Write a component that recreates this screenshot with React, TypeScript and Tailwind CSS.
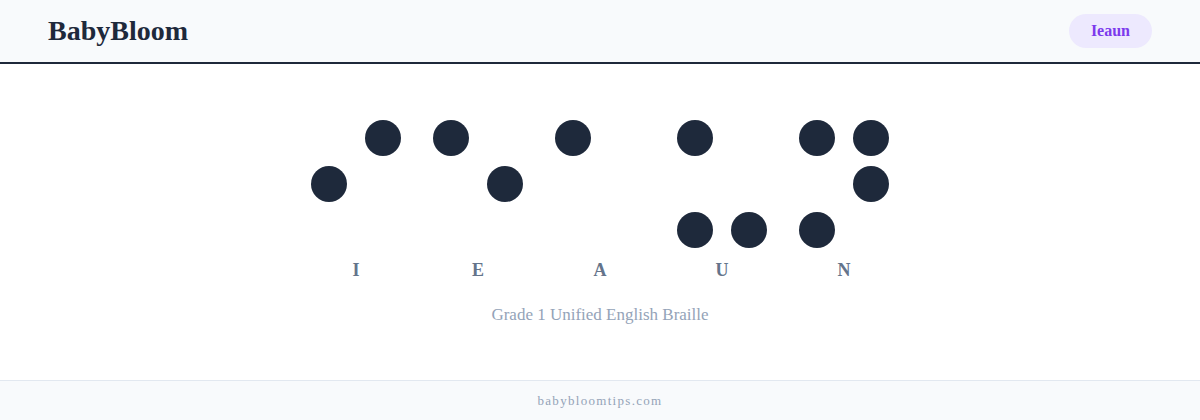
const cells: { letter: string; dots: number[] }[] = [
  { letter: 'I', dots: [2, 4] },
  { letter: 'E', dots: [1, 5] },
  { letter: 'A', dots: [1] },
  { letter: 'U', dots: [1, 3, 6] },
  { letter: 'N', dots: [1, 3, 4, 5] },
];

// braille dot numbering: left column 1,2,3 ; right column 4,5,6
const order = [1, 4, 2, 5, 3, 6];

const BrailleCell = ({ letter, dots }: { letter: string; dots: number[] }) => (
  <div className="flex flex-col items-center">
    <div className="grid grid-cols-[36px_36px] gap-x-[18px] gap-y-[10px]">
      {order.map((n) => (
        <div
          key={n}
          className={'h-9 w-9 rounded-full ' + (dots.includes(n) ? 'bg-[#1e293b]' : 'bg-transparent')}
        />
      ))}
    </div>
    <div className="mt-[10px] text-[18px] leading-6 font-semibold text-[#64748b]">{letter}</div>
  </div>
);

export default function App() {
  return (
    <div className="flex h-[420px] w-full flex-col bg-white font-['Liberation_Serif',serif]">
      <header className="flex h-16 shrink-0 items-center justify-between border-b-2 border-[#1e293b] bg-[#f8fafc] pl-12 pr-12">
        <div className="text-[28px] font-bold text-[#1e293b]">BabyBloom</div>
        <div className="rounded-full bg-[#ede9fe] px-[22px] py-[5px] text-[16px] font-semibold text-[#7c3aed]">Ieaun</div>
      </header>
      <main className="flex flex-1 flex-col items-center pt-[56px]">
        <div className="flex gap-8">
          {cells.map((c) => (
            <BrailleCell key={c.letter} letter={c.letter} dots={c.dots} />
          ))}
        </div>
        <div className="mt-[22px] text-[17px] leading-[22px] text-[#94a3b8]">Grade 1 Unified English Braille</div>
      </main>
      <footer className="flex h-10 shrink-0 items-center justify-center border-t border-[#e2e8f0] bg-[#f8fafc] text-[13px] tracking-[0.1em] text-[#94a3b8]">
        babybloomtips.com
      </footer>
    </div>
  );
}
